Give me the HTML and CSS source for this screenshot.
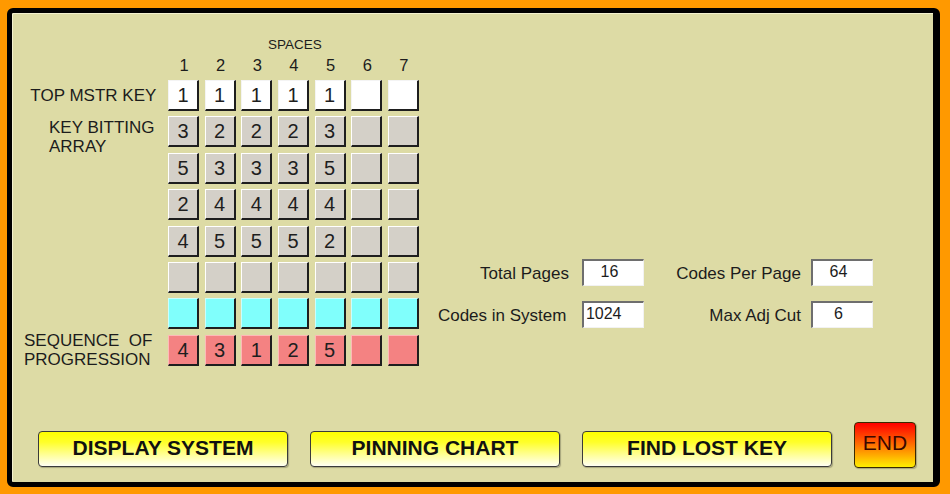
FILE: index.html
```html
<!DOCTYPE html>
<html>
<head>
<meta charset="utf-8">
<link rel="stylesheet" href="styles.css">
</head>
<body>
<div class="frame">
  <div class="panel">
    <div class="top">
      <div class="grid">
        <div class="spaces">SPACES</div>
        <div class="colhead-blank"></div>
        <div class="colnum">1</div><div class="colnum">2</div><div class="colnum">3</div><div class="colnum">4</div><div class="colnum">5</div><div class="colnum">6</div><div class="colnum">7</div>

        <div class="label label-top">TOP MSTR KEY</div>
        <div class="cell white">1</div><div class="cell white">1</div><div class="cell white">1</div><div class="cell white">1</div><div class="cell white">1</div><div class="cell white"></div><div class="cell white"></div>

        <div class="label label-bitting">KEY BITTING<br>ARRAY</div>
        <div class="cell gray">3</div><div class="cell gray">2</div><div class="cell gray">2</div><div class="cell gray">2</div><div class="cell gray">3</div><div class="cell gray"></div><div class="cell gray"></div>

        <div class="label"></div>
        <div class="cell gray">5</div><div class="cell gray">3</div><div class="cell gray">3</div><div class="cell gray">3</div><div class="cell gray">5</div><div class="cell gray"></div><div class="cell gray"></div>

        <div class="label"></div>
        <div class="cell gray">2</div><div class="cell gray">4</div><div class="cell gray">4</div><div class="cell gray">4</div><div class="cell gray">4</div><div class="cell gray"></div><div class="cell gray"></div>

        <div class="label"></div>
        <div class="cell gray">4</div><div class="cell gray">5</div><div class="cell gray">5</div><div class="cell gray">5</div><div class="cell gray">2</div><div class="cell gray"></div><div class="cell gray"></div>

        <div class="label"></div>
        <div class="cell gray"></div><div class="cell gray"></div><div class="cell gray"></div><div class="cell gray"></div><div class="cell gray"></div><div class="cell gray"></div><div class="cell gray"></div>

        <div class="label"></div>
        <div class="cell cyan"></div><div class="cell cyan"></div><div class="cell cyan"></div><div class="cell cyan"></div><div class="cell cyan"></div><div class="cell cyan"></div><div class="cell cyan"></div>

        <div class="label label-seq">SEQUENCE&nbsp; OF<br>PROGRESSION</div>
        <div class="cell red">4</div><div class="cell red">3</div><div class="cell red">1</div><div class="cell red">2</div><div class="cell red">5</div><div class="cell red"></div><div class="cell red"></div>
      </div>

      <div class="fields">
        <div class="flabel flabel-a">Total Pages</div>
        <div class="fbox">16</div>
        <div class="flabel flabel-b">Codes Per Page</div>
        <div class="fbox">64</div>
        <div class="flabel flabel-c">Codes in System</div>
        <div class="fbox fbox-left">1024</div>
        <div class="flabel flabel-b">Max Adj Cut</div>
        <div class="fbox">6</div>
      </div>
    </div>

    <div class="buttons">
      <div class="btn">DISPLAY SYSTEM</div>
      <div class="btn">PINNING CHART</div>
      <div class="btn">FIND LOST KEY</div>
      <div class="end">END</div>
    </div>
  </div>
</div>
</body>
</html>
```

FILE: styles.css
```css
* { box-sizing: border-box; }

html, body {
  margin: 0;
  padding: 0;
}

body {
  width: 950px;
  height: 494px;
  overflow: hidden;
  font-family: "Liberation Sans", Arial, sans-serif;
  color: #1c1c1c;
}

.frame {
  width: 950px;
  height: 494px;
  background: #ff9900;
  padding: 8px 10px 7px 7px;
}

.panel {
  height: 100%;
  background: #dddba5;
  border-style: solid;
  border-color: #000;
  border-width: 5px 7px 5px 5px;
  border-radius: 6px;
  box-shadow: inset 1px 1px 0 #f3f1cf;
  display: flex;
  flex-direction: column;
  padding: 26px 0 15px 12px;
}

.top {
  display: flex;
  align-items: flex-start;
}

.grid {
  display: grid;
  grid-template-columns: 138.33px repeat(7, 31px);
  grid-template-rows: 12px 18px repeat(8, 31px);
  column-gap: 5.67px;
  row-gap: 5.43px;
}

.spaces {
  grid-column: 2 / 9;
  text-align: center;
  font-size: 13.5px;
  line-height: 12px;
  padding-left: 3px;
}

.colhead-blank {
  grid-column: 1;
}

.colnum {
  text-align: center;
  font-size: 16.5px;
  line-height: 18px;
  padding-left: 1px;
}

.label {
  grid-column: 1;
  font-size: 17px;
  line-height: 19px;
  white-space: nowrap;
}

.label-top {
  justify-self: end;
  align-self: center;
  margin-right: 6px;
}

.label-bitting {
  align-self: start;
  margin-left: 25px;
  margin-top: 2px;
  height: 31px;
}

.label-seq {
  align-self: center;
  height: 38px;
}

.cell {
  width: 31px;
  height: 31px;
  border-style: solid;
  border-width: 1px 2px 2px 1px;
  border-color: #ffffff #1e1e1e #1e1e1e #ffffff;
  font-size: 20px;
  line-height: 28px;
  text-align: center;
  color: #1e1e1e;
}

.white { background: #ffffff; border-color: #f4f4f4 #1e1e1e #1e1e1e #f4f4f4; }
.gray { background: #d4d0c8; }
.cyan { background: #80fffc; border-color: #c8ffff #1e1e1e #1e1e1e #c8ffff; }
.red { background: #f48282; border-color: #ffb8b8 #1e1e1e #1e1e1e #ffb8b8; }

.fields {
  display: grid;
  grid-template-columns: 144px 62px 167px 62px;
  grid-template-rows: 27px 27px;
  row-gap: 15px;
  margin-left: 19px;
  margin-top: 220px;
}

.flabel {
  text-align: right;
  font-size: 17px;
  line-height: 27px;
  white-space: nowrap;
  padding-top: 1px;
}

.flabel-a { padding-right: 13px; }
.flabel-b { padding-right: 10px; }
.flabel-c { padding-right: 17px; }

.fbox {
  background: #ffffff;
  border-style: solid;
  border-width: 2px 1px 1px 2px;
  border-color: #6e6e6e #f2f2f2 #f2f2f2 #6e6e6e;
  font-size: 16px;
  line-height: 22px;
  text-align: center;
  padding-right: 8px;
}

.fbox-left {
  text-align: left;
  padding-left: 2px;
  padding-right: 0;
}

.buttons {
  margin-top: auto;
  display: flex;
  align-items: flex-end;
  gap: 22px;
  padding-left: 14px;
}

.btn {
  width: 250px;
  height: 36px;
  border: 1px solid #3a3a3a;
  border-radius: 4px;
  background: linear-gradient(#ffff00 0%, #ffff2a 30%, #ffffa0 70%, #fffff2 100%);
  box-shadow: 1px 1px 1px rgba(0, 0, 0, 0.25);
  font-weight: bold;
  font-size: 21px;
  line-height: 31px;
  text-align: center;
  color: #111;
}

.end {
  width: 62px;
  height: 46px;
  margin-bottom: -1px;
  border: 1px solid #3a2a00;
  border-radius: 4px;
  background: linear-gradient(#ff0000 0%, #ff5a00 40%, #ffb000 75%, #ffee00 100%);
  box-shadow: 1px 1px 1px rgba(0, 0, 0, 0.25);
  font-size: 21px;
  line-height: 21px;
  padding-top: 9px;
  text-align: center;
  color: #3a0800;
}
```
